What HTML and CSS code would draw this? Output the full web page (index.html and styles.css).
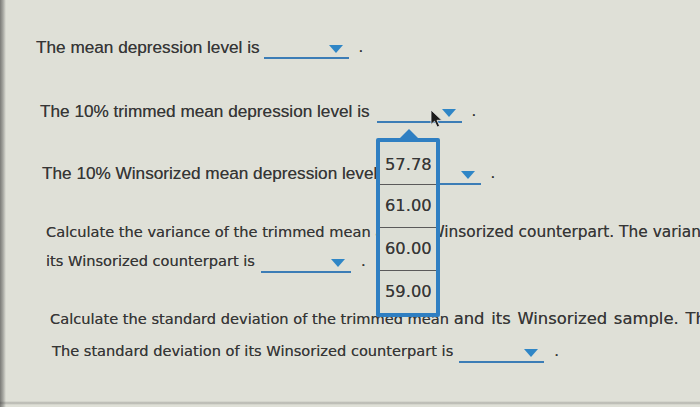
FILE: index.html
```html
<!DOCTYPE html>
<html>
<head>
<meta charset="utf-8">
<link rel="stylesheet" href="styles.css">
</head>
<body>
<div class="page">
  <div class="row arial r1">
    <span class="txt">The mean depression level is</span>
    <span class="blank"><span class="tri"></span></span>
    <span class="dot">.</span>
  </div>
  <div class="row arial r2">
    <span class="txt">The 10% trimmed mean depression level is</span>
    <span class="blank"><span class="tri"></span></span>
    <span class="dot">.</span>
  </div>
  <div class="row arial r3">
    <span class="txt">The 10% Winsorized mean depression level is</span>
    <span class="blank short"><span class="tri"></span></span>
    <span class="dot">.</span>
  </div>
  <div class="row verd r4">
    <span class="txt">Calculate the variance of the trimmed mean and its <span class="near">Winsorized counterpart. The variance</span></span>
  </div>
  <div class="row verd r5">
    <span class="txt">its Winsorized counterpart is</span>
    <span class="blank mid"><span class="tri"></span></span>
    <span class="dot">.</span>
  </div>
  <div class="row verd r6">
    <span class="txt">Calculate the standard deviation of the trimmed mean <span class="closer">and its Winsorized sample. The</span></span>
  </div>
  <div class="row verd r7">
    <span class="txt">The standard deviation of its Winsorized counterpart is</span>
    <span class="blank"><span class="tri"></span></span>
    <span class="dot">.</span>
  </div>

  <div class="menu">
    <span class="notch"></span>
    <div class="opt">57.78</div>
    <div class="opt">61.00</div>
    <div class="opt">60.00</div>
    <div class="opt">59.00</div>
  </div>

  <svg class="cursor" width="13" height="19" viewBox="0 0 13 19">
    <path d="M1 1 L1 15.5 L4.5 12.2 L7.2 18 L9.6 16.9 L7 11.3 L11.8 11.3 Z" fill="#1c1c1c" stroke="#e8e8e8" stroke-width="0.8"/>
  </svg>
</div>
</body>
</html>
```
FILE: styles.css
```css
html, body {
  margin: 0;
  padding: 0;
}
body {
  width: 700px;
  height: 407px;
  overflow: hidden;
  background-color: #dfe0d7;
  background-image:
    linear-gradient(to right, rgba(40,40,40,0.55) 0, rgba(60,60,60,0.35) 3px, rgba(0,0,0,0) 6px),
    linear-gradient(to bottom, rgba(0,0,0,0) 0, rgba(0,0,0,0) 401px, rgba(150,150,145,0.6) 403px, rgba(0,0,0,0) 405px);
  color: #363636;
}
.page {
  position: relative;
  width: 700px;
  height: 407px;
  padding-top: 37px;
  box-sizing: border-box;
  overflow: hidden;
}
.row {
  display: flex;
  align-items: flex-start;
  height: 20px;
  line-height: 20px;
  white-space: nowrap;
  text-shadow: 0 0 0.6px rgba(30, 30, 30, 0.6);
}
.arial {
  font-family: "Liberation Sans", Arial, sans-serif;
  font-size: 17.2px;
}
.verd {
  font-family: "DejaVu Sans", Verdana, sans-serif;
  font-size: 14.6px;
}
.near { font-size: 15.4px; }
.closer { font-size: 16.4px; word-spacing: 1.5px; }
.r1 { padding-left: 36px; }
.r2 { padding-left: 40px; margin-top: 44px; }
.r3 { padding-left: 42px; margin-top: 42px; }
.r4 { padding-left: 46px; margin-top: 39px; }
.r5 { padding-left: 46px; margin-top: 9px; }
.r6 { padding-left: 50px; margin-top: 38px; }
.r7 { padding-left: 52px; margin-top: 12px; }

.blank {
  display: flex;
  justify-content: flex-end;
  align-items: flex-start;
  flex: none;
  width: 85px;
  height: 12px;
  margin-left: 6px;
  padding-top: 8px;
  box-sizing: content-box;
  border-bottom: 2px solid #3c7db6;
}
.r1 .blank { margin-left: 4px; }
.r2 .blank { margin-left: 7px; }
.blank.short { width: 80px; }
.blank.mid { width: 90px; }
.tri {
  width: 0;
  height: 0;
  margin-right: 6px;
  border-left: 7px solid transparent;
  border-right: 7px solid transparent;
  border-top: 8px solid #2f86c6;
}
.dot {
  margin-left: 10px;
  font-family: "Liberation Sans", Arial, sans-serif;
  font-size: 17px;
}

.menu {
  position: absolute;
  left: 376px;
  top: 138px;
  width: 56px;
  border: 4px solid #2f7fc2;
  border-radius: 2px;
  background: #dddfd6;
  font-family: "DejaVu Sans", Verdana, sans-serif;
  font-size: 16.3px;
  color: #363636;
  text-shadow: 0 0 0.6px rgba(30, 30, 30, 0.6);
}
.notch {
  position: absolute;
  left: 20px;
  top: -13px;
  width: 0;
  height: 0;
  border-left: 9px solid transparent;
  border-right: 9px solid transparent;
  border-bottom: 9px solid #2f7fc2;
}
.opt {
  height: 42px;
  line-height: 42px;
  padding-left: 5px;
  border-top: 1px solid #5a5a5a;
}
.opt:first-of-type {
  border-top: none;
  line-height: 46px;
}
.cursor {
  position: absolute;
  left: 430px;
  top: 109px;
}
```
